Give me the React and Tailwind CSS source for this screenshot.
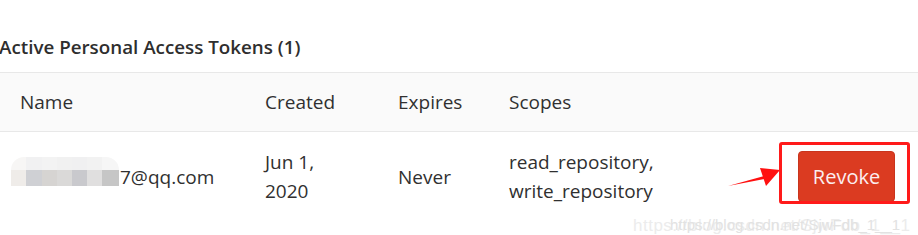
import React from "react";

export default function App() {
  const font = { fontFamily: '"Open Sans", "Noto Sans", sans-serif' };
  return (
    <div className="relative w-[918px] h-[235px] overflow-hidden bg-white text-[#2e2e2e]" style={font}>
      <div className="h-[72px] pt-[32px] pl-0 -ml-[1px]">
        <h4 className="text-[18.8px] leading-[30px] font-semibold text-[#2e2e2e]">Active Personal Access Tokens (1)</h4>
      </div>
      <div className="grid grid-cols-[265px_133px_111px_1fr_138px] h-[60px] bg-[#fafafa] border-y border-[#e8e8e8] items-center text-[19px] text-[#303030]">
        <div className="pl-[20px]">Name</div>
        <div>Created</div>
        <div>Expires</div>
        <div>Scopes</div>
        <div></div>
      </div>
      <div className="grid grid-cols-[265px_133px_111px_1fr_138px] h-[90px] items-center text-[19px] leading-[29px] text-[#303030]">
        <div className="flex items-center pl-[11px]">
          <div className="flex flex-col w-[108px] -mt-[11px]">
            <div className="flex h-[13px] rounded-t-[14px] overflow-hidden">
              <div className="w-[15px] bg-[#f7f6f5]"></div>
              <div className="w-[16px] bg-[#f1f1f2]"></div>
              <div className="w-[15px] bg-[#f3f3f3]"></div>
              <div className="w-[15px] bg-[#f1f1f1]"></div>
              <div className="w-[15px] bg-[#f0f0f1]"></div>
              <div className="w-[15px] bg-[#f2f2f2]"></div>
              <div className="w-[17px] bg-[#f6f6f6] rounded-tr-[10px]"></div>
            </div>
            <div className="flex h-[16px]">
              <div className="w-[15px] bg-[#efece9]"></div>
              <div className="w-[16px] bg-[#cfd0d4]"></div>
              <div className="w-[15px] bg-[#d6d4d2]"></div>
              <div className="w-[15px] bg-[#dad9d8]"></div>
              <div className="w-[15px] bg-[#c9c9cd]"></div>
              <div className="w-[15px] bg-[#e0dfdf]"></div>
              <div className="w-[17px] bg-[#c6c6c6]"></div>
            </div>
          </div>
          <span className="ml-[1px]">7@qq.com</span>
        </div>
        <div>Jun 1,<br />2020</div>
        <div>Never</div>
        <div>read_repository,<br />write_repository</div>
        <div className="flex">
          <button className="ml-[18px] w-[97px] h-[51px] -mt-[2px] rounded-[4px] bg-[#db3b21] text-[#fbeef0] text-[20px] border border-[#c9341d]">Revoke</button>
        </div>
      </div>
      {/* annotation box */}
      <div className="absolute left-[779px] top-[142px] w-[131px] h-[62px] border-[3px] border-[#ff1a1a] rounded-[3px]"></div>
      {/* arrow */}
      <svg className="absolute left-[724px] top-[160px]" width="60" height="32" viewBox="0 0 60 32">
        <polygon points="4,26 42,15.5 43,18.5" fill="#ff1010" />
        <polygon points="36,8 56,10 42,26" fill="#ff1010" />
      </svg>
      {/* watermark */}
      <div className="absolute left-[633px] top-[213px] text-[17px] text-[#ececec] whitespace-nowrap tracking-[0.5px]" style={{ fontFamily: '"Liberation Sans", Arial, sans-serif' }}>https://blog.csdn.net/SjwFdb_1__1</div>
      <div className="absolute left-[670px] top-[214px] text-[15px] text-[#e2e2e2] whitespace-nowrap" style={{ fontFamily: '"Liberation Sans", Arial, sans-serif' }}>https://blog.csdn.net/SjwFdb_1__1</div>
    </div>
  );
}
